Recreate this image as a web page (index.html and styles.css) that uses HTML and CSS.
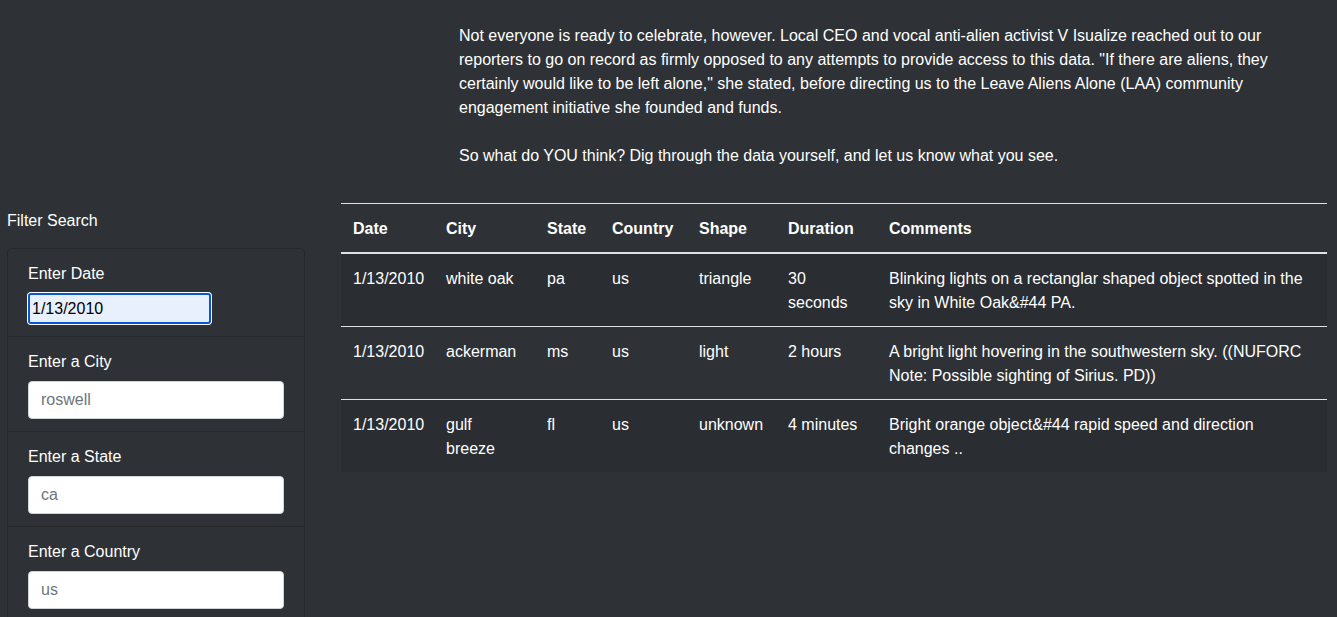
FILE: index.html
```html
<!DOCTYPE html>
<html lang="en">
<head>
<meta charset="utf-8">
<title>UFO Sightings</title>
<link rel="stylesheet" href="styles.css">
</head>
<body>
<section class="story">
  <p>Not everyone is ready to celebrate, however. Local CEO and vocal anti-alien activist V Isualize reached out to our reporters to go on record as firmly opposed to any attempts to provide access to this data. "If there are aliens, they certainly would like to be left alone," she stated, before directing us to the Leave Aliens Alone (LAA) community engagement initiative she founded and funds.</p>
  <p>So what do YOU think? Dig through the data yourself, and let us know what you see.</p>
</section>
<div class="main">
  <aside class="sidebar">
    <div class="filter-title">Filter Search</div>
    <ul class="filters">
      <li class="filter-item">
        <label for="datetime">Enter Date</label>
        <input class="date-input" id="datetime" type="text" value="1/13/2010">
      </li>
      <li class="filter-item">
        <label for="city">Enter a City</label>
        <input class="form-input" id="city" type="text" placeholder="roswell">
      </li>
      <li class="filter-item">
        <label for="state">Enter a State</label>
        <input class="form-input" id="state" type="text" placeholder="ca">
      </li>
      <li class="filter-item">
        <label for="country">Enter a Country</label>
        <input class="form-input" id="country" type="text" placeholder="us">
      </li>
    </ul>
  </aside>
  <div class="table-wrap">
    <table class="ufo-table">
      <colgroup>
        <col class="c-date"><col class="c-city"><col class="c-state"><col class="c-country"><col class="c-shape"><col class="c-duration"><col class="c-comments">
      </colgroup>
      <thead>
        <tr><th>Date</th><th>City</th><th>State</th><th>Country</th><th>Shape</th><th>Duration</th><th>Comments</th></tr>
      </thead>
      <tbody>
        <tr><td>1/13/2010</td><td>white oak</td><td>pa</td><td>us</td><td>triangle</td><td>30 seconds</td><td>Blinking lights on a rectanglar shaped object spotted in the sky in White Oak&amp;#44 PA.</td></tr>
        <tr><td>1/13/2010</td><td>ackerman</td><td>ms</td><td>us</td><td>light</td><td>2 hours</td><td>A bright light hovering in the southwestern sky. ((NUFORC Note: Possible sighting of Sirius. PD))</td></tr>
        <tr><td>1/13/2010</td><td>gulf breeze</td><td>fl</td><td>us</td><td>unknown</td><td>4 minutes</td><td>Bright orange object&amp;#44 rapid speed and direction changes ..</td></tr>
      </tbody>
    </table>
  </div>
</div>
</body>
</html>
```
FILE: styles.css
```css
html, body {
  margin: 0;
  padding: 0;
  background: #2e3236;
  color: #ffffff;
  font-family: "Liberation Sans", Arial, sans-serif;
  font-size: 16px;
  line-height: 24px;
}

.story {
  padding: 24px 0 0 459px;
}

.story p {
  margin: 0 0 24px 0;
  width: 860px;
}

.story p:last-child {
  margin-bottom: 0;
}

.main {
  display: flex;
  align-items: flex-start;
  margin-top: 35px;
  padding: 0 10px 0 7px;
  gap: 35px;
}

.sidebar {
  width: 299px;
  flex: 0 0 299px;
}

.filter-title {
  padding-top: 6px;
  margin-bottom: 15px;
}

.filters {
  list-style: none;
  margin: 0;
  padding: 0;
  border: 1px solid rgba(0, 0, 0, 0.18);
  border-radius: 4px;
  width: 298px;
  box-sizing: border-box;
}

.filter-item {
  padding: 12px 20px;
  border-bottom: 1px solid rgba(0, 0, 0, 0.18);
}

.filter-item:last-child {
  border-bottom: none;
}

.filter-item label {
  display: block;
  margin-bottom: 8px;
  position: relative;
  top: 1px;
}

.date-input {
  display: block;
  box-sizing: border-box;
  width: 183px;
  height: 31px;
  padding: 0 2px;
  margin: 0;
  border: 2px solid #0b57d0;
  border-radius: 3px;
  box-shadow: 0 0 0 1px #ffffff;
  background: #e8f0fe;
  color: #000000;
  font-family: "Liberation Sans", Arial, sans-serif;
  font-size: 16px;
  outline: none;
}

.form-input {
  display: block;
  box-sizing: border-box;
  width: 100%;
  height: 38px;
  padding: 6px 12px;
  margin: 0;
  border: 1px solid #ced4da;
  border-radius: 4px;
  background: #ffffff;
  color: #495057;
  font-family: "Liberation Sans", Arial, sans-serif;
  font-size: 16px;
}

.form-input::placeholder {
  color: #6c757d;
  opacity: 1;
}

.table-wrap {
  flex: 1 1 auto;
}

.ufo-table {
  width: 986px;
  table-layout: fixed;
  border-collapse: collapse;
  color: #ffffff;
}

.c-date { width: 93px; }
.c-city { width: 101px; }
.c-state { width: 65px; }
.c-country { width: 87px; }
.c-shape { width: 89px; }
.c-duration { width: 101px; }
.c-comments { width: 450px; }

.ufo-table th,
.ufo-table td {
  padding: 13px 12px 11px 12px;
  text-align: left;
  vertical-align: top;
}

.ufo-table th {
  font-weight: bold;
  border-top: 1px solid #dee2e6;
  border-bottom: 2px solid #dee2e6;
}

.ufo-table tbody tr {
  border-top: 1px solid #dee2e6;
}

.ufo-table thead + tbody tr:first-child {
  border-top: none;
}

.ufo-table tbody tr:nth-child(odd) {
  background: #2a2d31;
}
```
